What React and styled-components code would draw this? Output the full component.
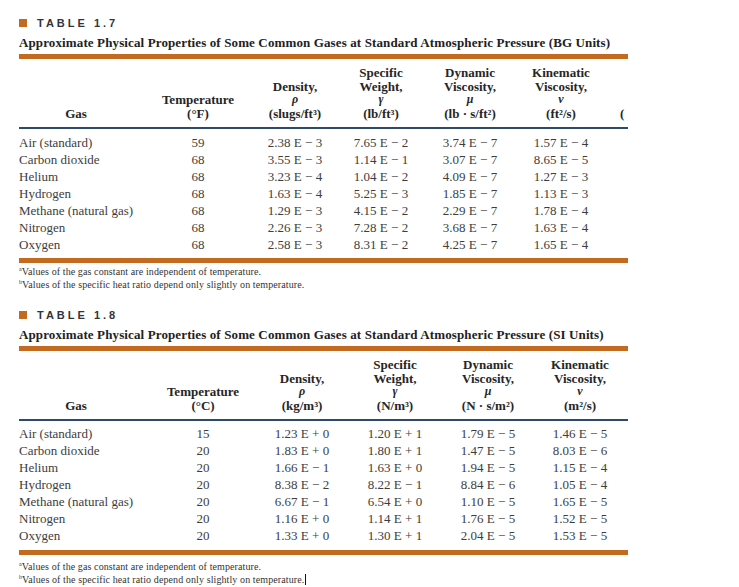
import React from 'react';
import styled, { createGlobalStyle } from 'styled-components';

const GlobalStyle = createGlobalStyle`
  html, body {
    margin: 0;
    padding: 0;
    background: #ffffff;
  }
`;

const ORANGE = '#c26a1f';
const NAVY = '#2f4a68';

const Page = styled.div`
  width: 609px;
  padding: 16px 0 0 19px;
  font-family: 'Liberation Serif', 'Times New Roman', serif;
  overflow: hidden;
`;

const Block = styled.section`
  display: flex;
  flex-direction: column;
  margin-top: ${p => p.$gap || 0}px;
`;

const TitleRow = styled.div`
  display: flex;
  align-items: center;
  height: 14px;
  gap: 10px;
`;

const Square = styled.span`
  width: 8px;
  height: 8px;
  background: ${ORANGE};
`;

const TitleText = styled.span`
  font-family: 'Liberation Sans', Arial, sans-serif;
  font-weight: 700;
  font-size: 11px;
  letter-spacing: 3px;
  color: #2f3440;
`;

const Subtitle = styled.div`
  margin-top: 5px;
  font-size: 13px;
  line-height: 16px;
  font-weight: 700;
  letter-spacing: 0.12px;
  color: #222;
  white-space: nowrap;
`;

const OrangeBar = styled.div`
  height: 5px;
  background: ${ORANGE};
  margin-top: ${p => p.$top || 0}px;
`;

const Grid = styled.div`
  display: grid;
  grid-template-columns: ${p => p.$cols};
  overflow: hidden;
`;

const HeadGrid = styled(Grid)`
  height: 70px;
  padding-bottom: 7px;
  box-sizing: border-box;
  align-items: end;
  border-bottom: 2px solid ${NAVY};
`;

const HeadCell = styled.div`
  display: flex;
  flex-direction: column;
  align-items: ${p => (p.$start ? 'flex-start' : 'center')};
  padding-left: ${p => (p.$start ? 3 : 0)}px;
  font-size: 13px;
  line-height: 13.5px;
  font-weight: 700;
  color: #262626;
  white-space: nowrap;
`;

const Sym = styled.span`
  font-style: italic;
  font-size: 12px;
`;

const Body = styled.div`
  padding: ${p => p.$pad};
`;

const Row = styled(Grid)`
  height: 17px;
  align-items: center;
`;

const Cell = styled.div`
  display: flex;
  justify-content: ${p => (p.$left ? 'flex-start' : 'center')};
  font-size: 13px;
  line-height: 17px;
  color: #3d3d3d;
  white-space: nowrap;
`;

const Notes = styled.div`
  margin-top: ${p => p.$top}px;
  font-size: 10px;
  line-height: 13px;
  letter-spacing: 0.1px;
  color: #333;
`;

const Note = styled.div`
  display: flex;
  align-items: center;
  white-space: nowrap;
`;

const Mark = styled.span`
  align-self: flex-start;
  margin-top: 1px;
  font-size: 6px;
  line-height: 6px;
`;

const Caret = styled.span`
  width: 1px;
  height: 11px;
  margin-left: 1px;
  background: #111;
`;

const tableBG = {
  number: '1.7',
  subtitle:
    'Approximate Physical Properties of Some Common Gases at Standard Atmospheric Pressure (BG Units)',
  cols: '114px 130px 64px 108px 70px 112px 11px',
  heads: [
    ['Gas'],
    ['Temperature', '(°F)'],
    ['Density,', { sym: 'ρ' }, '(slugs/ft³)'],
    ['Specific', 'Weight,', { sym: 'γ' }, '(lb/ft³)'],
    ['Dynamic', 'Viscosity,', { sym: 'μ' }, '(lb · s/ft²)'],
    ['Kinematic', 'Viscosity,', { sym: 'ν' }, '(ft²/s)'],
  ],
  extra: '(',
  pad: '5px 0 5px',
  rows: [
    ['Air (standard)', '59', '2.38 E − 3', '7.65 E − 2', '3.74 E − 7', '1.57 E − 4'],
    ['Carbon dioxide', '68', '3.55 E − 3', '1.14 E − 1', '3.07 E − 7', '8.65 E − 5'],
    ['Helium', '68', '3.23 E − 4', '1.04 E − 2', '4.09 E − 7', '1.27 E − 3'],
    ['Hydrogen', '68', '1.63 E − 4', '5.25 E − 3', '1.85 E − 7', '1.13 E − 3'],
    ['Methane (natural gas)', '68', '1.29 E − 3', '4.15 E − 2', '2.29 E − 7', '1.78 E − 4'],
    ['Nitrogen', '68', '2.26 E − 3', '7.28 E − 2', '3.68 E − 7', '1.63 E − 4'],
    ['Oxygen', '68', '2.58 E − 3', '8.31 E − 2', '4.25 E − 7', '1.65 E − 4'],
  ],
  notesTop: 2,
};

const tableSI = {
  number: '1.8',
  subtitle:
    'Approximate Physical Properties of Some Common Gases at Standard Atmospheric Pressure (SI Units)',
  cols: '114px 140px 58px 128px 58px 126px',
  heads: [
    ['Gas'],
    ['Temperature', '(°C)'],
    ['Density,', { sym: 'ρ' }, '(kg/m³)'],
    ['Specific', 'Weight,', { sym: 'γ' }, '(N/m³)'],
    ['Dynamic', 'Viscosity,', { sym: 'μ' }, '(N · s/m²)'],
    ['Kinematic', 'Viscosity,', { sym: 'ν' }, '(m²/s)'],
  ],
  pad: '4px 0 6px',
  rows: [
    ['Air (standard)', '15', '1.23 E + 0', '1.20 E + 1', '1.79 E − 5', '1.46 E − 5'],
    ['Carbon dioxide', '20', '1.83 E + 0', '1.80 E + 1', '1.47 E − 5', '8.03 E − 6'],
    ['Helium', '20', '1.66 E − 1', '1.63 E + 0', '1.94 E − 5', '1.15 E − 4'],
    ['Hydrogen', '20', '8.38 E − 2', '8.22 E − 1', '8.84 E − 6', '1.05 E − 4'],
    ['Methane (natural gas)', '20', '6.67 E − 1', '6.54 E + 0', '1.10 E − 5', '1.65 E − 5'],
    ['Nitrogen', '20', '1.16 E + 0', '1.14 E + 1', '1.76 E − 5', '1.52 E − 5'],
    ['Oxygen', '20', '1.33 E + 0', '1.30 E + 1', '2.04 E − 5', '1.53 E − 5'],
  ],
  notesTop: 5,
  caret: true,
};

function GasTable({ data, gap }) {
  return (
    <Block $gap={gap}>
      <TitleRow>
        <Square />
        <TitleText>TABLE {data.number}</TitleText>
      </TitleRow>
      <Subtitle>{data.subtitle}</Subtitle>
      <OrangeBar $top={3} />
      <HeadGrid $cols={data.cols}>
        {data.heads.map((lines, i) => (
          <HeadCell key={i}>
            {lines.map((l, j) =>
              typeof l === 'string' ? <span key={j}>{l}</span> : <Sym key={j}>{l.sym}</Sym>
            )}
          </HeadCell>
        ))}
        {data.extra && (
          <HeadCell $start>
            <span>{data.extra}</span>
          </HeadCell>
        )}
      </HeadGrid>
      <Body $pad={data.pad}>
        {data.rows.map((r, i) => (
          <Row key={i} $cols={data.cols}>
            {r.map((v, j) => (
              <Cell key={j} $left={j === 0}>
                {v}
              </Cell>
            ))}
          </Row>
        ))}
      </Body>
      <OrangeBar />
      <Notes $top={data.notesTop}>
        <Note>
          <Mark>a</Mark>Values of the gas constant are independent of temperature.
        </Note>
        <Note>
          <Mark>b</Mark>Values of the specific heat ratio depend only slightly on temperature.
          {data.caret && <Caret />}
        </Note>
      </Notes>
    </Block>
  );
}

export default function App() {
  return (
    <>
      <GlobalStyle />
      <Page>
        <GasTable data={tableBG} />
        <GasTable data={tableSI} gap={17} />
      </Page>
    </>
  );
}
